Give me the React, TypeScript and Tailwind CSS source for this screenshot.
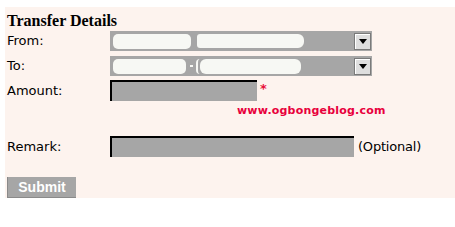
import React from 'react'

const label = 'w-[103px] shrink-0 text-[13px] text-black'

function Arrow() {
  return (
    <div className="mr-[1px] flex h-[17px] w-[17px] items-center justify-center border border-[#7a7a7a] bg-[#dedede] shadow-[inset_1px_1px_0_#ffffff]">
      <svg width="8" height="5" viewBox="0 0 8 5">
        <path d="M0 0 H8 L4 5 Z" fill="#000" />
      </svg>
    </div>
  )
}

function Blurred({ pieces }: { pieces: { w: number; cls: string }[] }) {
  return (
    <div className="flex flex-1 items-center pl-[3px]">
      {pieces.map((p, i) => (
        <div key={i} className={p.cls} style={{ width: p.w }} />
      ))}
    </div>
  )
}

export default function App() {
  return (
    <div className="h-[227px] w-[455px] bg-white pt-[7px] pl-[5px]" style={{ fontFamily: '"DejaVu Sans", Verdana, sans-serif' }}>
      <div className="h-[191px] bg-[#fdf3ee] pl-[2px] pt-[4px]">
        <h2 className="h-[20px] text-[16px] font-bold leading-[20px] text-black" style={{ fontFamily: '"Liberation Serif", serif' }}>
          Transfer Details
        </h2>

        <div className="flex h-[20px] items-center">
          <span className={label}>From:</span>
          <div className="flex h-[20px] w-[262px] items-center bg-[#a6a6a6]">
            <Blurred
              pieces={[
                { w: 78, cls: 'h-[15px] rounded-[5px] bg-[#f7f8f4]' },
                { w: 6, cls: 'mt-[6px] h-[6px] bg-[#a6a6a6]' },
                { w: 107, cls: 'h-[14px] rounded-r-[6px] rounded-l-[3px] bg-[#f7f8f4]' },
              ]}
            />
            <Arrow />
          </div>
        </div>

        <div className="mt-[5px] flex h-[20px] items-center">
          <span className={label}>To:</span>
          <div className="flex h-[20px] w-[262px] items-center bg-[#a6a6a6]">
            <Blurred
              pieces={[
                { w: 73, cls: 'h-[15px] rounded-[5px] bg-[#f7f8f4]' },
                { w: 4, cls: '' },
                { w: 3, cls: 'h-[2px] bg-[#f7f8f4]' },
                { w: 3, cls: '' },
                { w: 4, cls: 'h-[15px] rounded-l-full border-l-2 border-[#f7f8f4]' },
                { w: 101, cls: 'h-[15px] rounded-[6px] bg-[#f7f8f4]' },
              ]}
            />
            <Arrow />
          </div>
        </div>

        <div className="mt-[4px] flex h-[21px] items-center">
          <span className={label}>Amount:</span>
          <div className="h-[21px] w-[147px] border-t-2 border-l-2 border-black bg-[#a6a6a6]" />
          <span className="mb-[4px] ml-[3px] text-[13px] font-bold leading-none text-[#e8103a]">*</span>
        </div>

        <div className="flex h-[15px] items-end pl-[230px]">
          <span className="text-[11px] font-bold leading-none tracking-[0.2px] text-[#e8003c]">www.ogbongeblog.com</span>
        </div>

        <div className="mt-[20px] flex h-[21px] items-center">
          <span className={label}>Remark:</span>
          <div className="h-[21px] w-[244px] border-t-2 border-l-2 border-black bg-[#a6a6a6]" />
          <span className="ml-[4px] text-[13px] tracking-[-0.2px] text-black">(Optional)</span>
        </div>

        <button className="mt-[20px] h-[21px] w-[69px] border-b border-l border-[#8a8a8a] bg-[#a6a6a6] text-[14px] font-bold leading-none text-white" style={{ fontFamily: '"Liberation Sans", Arial, sans-serif' }}>
          Submit
        </button>
      </div>
    </div>
  )
}
